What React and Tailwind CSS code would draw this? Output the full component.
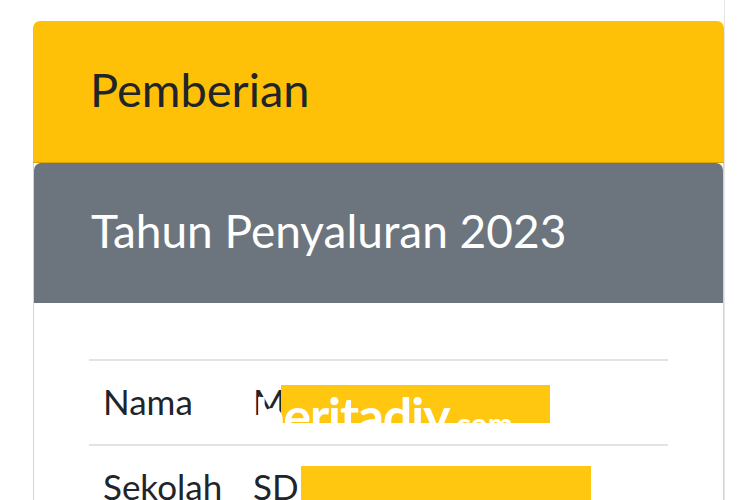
export default function App() {
  const font = { fontFamily: 'Lato, "Noto Sans", sans-serif' };

  return (
    <div className="w-[750px] h-[500px] overflow-hidden bg-white" style={font}>
      <div className="w-[725px] h-full border-r border-[#e6e6e6] pt-[21px] pl-[33px]">
        {/* Pemberian card */}
        <div className="w-[691px]">
          <div className="h-[142px] bg-[#ffc107] rounded-t-[7px] border-b border-[#d9a406] flex items-center pl-[57px] pb-[4px]">
            <h2 className="text-[47px] text-[#212529] leading-none">Pemberian</h2>
          </div>

          {/* nested card */}
          <div className="border-x border-[#d4d4d4]">
            <div className="h-[140px] bg-[#6c757d] rounded-t-[7px] flex items-center pl-[57px] pb-[4px]">
              <h3 className="text-[46px] text-white leading-none">Tahun Penyaluran 2023</h3>
            </div>

            <div className="pt-[56px] px-[55px] h-[200px]">
              <div className="border-t-2 border-[#e3e3e3]">
                <div className="flex items-center h-[83px] relative pb-[2px]">
                  <div className="w-[150px] px-[14px] text-[35px] text-[#212529]">Nama</div>
                  <div className="px-[14px] text-[35px] text-[#212529]">M</div>
                  {/* redaction + watermark */}
                  <div className="absolute left-[192px] top-[24px] w-[269px] h-[38px] bg-[#ffc70f]" />
                  <div className="absolute left-[166px] top-[28px] w-[320px] h-[34px] overflow-hidden whitespace-nowrap">
                    <span className="text-white font-bold text-[52px] leading-none tracking-tight">beritadiy</span>
                    <span className="text-white font-bold text-[30px] leading-none">.com</span>
                  </div>
                </div>
                <div className="flex items-center h-[83px] border-t-2 border-[#e3e3e3] relative">
                  <div className="w-[150px] px-[14px] text-[35px] text-[#212529]">Sekolah</div>
                  <div className="px-[14px] text-[35px] text-[#212529]">SD</div>
                  <div className="absolute left-[212px] top-[20px] w-[290px] h-[63px] bg-[#ffc70f]" />
                </div>
              </div>
            </div>
          </div>
        </div>
      </div>
    </div>
  );
}
